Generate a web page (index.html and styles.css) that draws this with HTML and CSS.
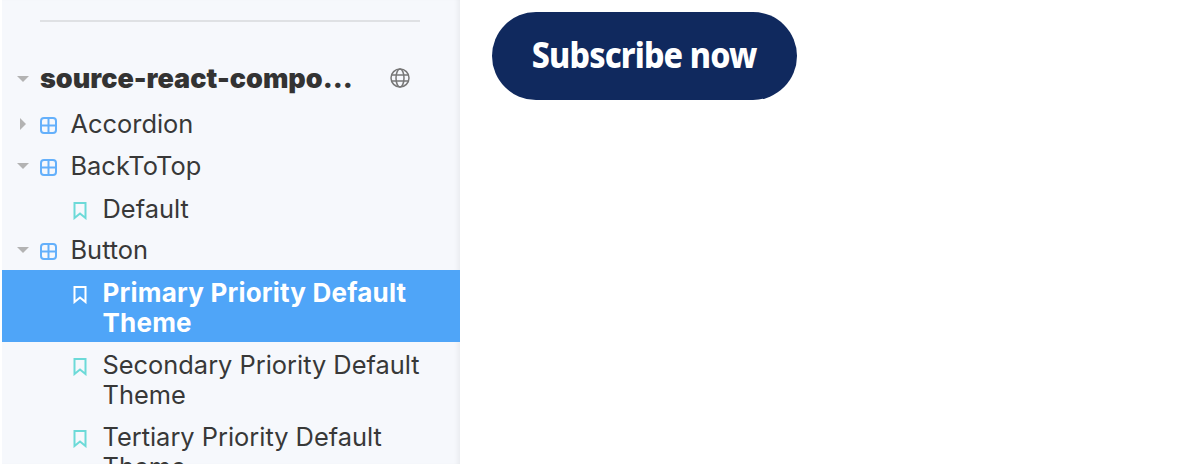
FILE: index.html
```html
<!DOCTYPE html>
<html lang="en">

<head>
    <meta charset="UTF-8">
    <meta name="viewport" content="width=device-width, initial-scale=1.0">
    <title>Button</title>

    <link rel="stylesheet" href="styles.css">
</head>

<body>
    <svg class="defs" width="0" height="0">
        <symbol id="caret-down" viewBox="0 0 12 6"><path d="M0 0h12L6 6z"/></symbol>
        <symbol id="caret-right" viewBox="0 0 6 12"><path d="M0 0l6 6-6 6z"/></symbol>
        <symbol id="grid" viewBox="0 0 17 17"><rect x="1" y="1" width="15" height="15" rx="3"/><path d="M8.500 1v15M1 8.500h15"/></symbol>
        <symbol id="mark" viewBox="0 0 14 18"><path d="M1.500 1h11v15L7 11.500 1.500 16z"/></symbol>
    </svg>

    <div class="sidebar">
        <div class="divider"></div>

        <div class="group">
            <svg class="caret"><use href="#caret-down"/></svg>
            <span class="group-name">source-react-compo...</span>
            <svg class="globe" viewBox="0 0 20 20">
                <circle cx="10" cy="10" r="9"/>
                <ellipse cx="10" cy="10" rx="4" ry="9"/>
                <path d="M1.500 7h17M1.500 13h17"/>
            </svg>
        </div>

        <div class="row">
            <svg class="caret-side"><use href="#caret-right"/></svg>
            <svg class="grid"><use href="#grid"/></svg>
            <span>Accordion</span>
        </div>
        <div class="row">
            <svg class="caret"><use href="#caret-down"/></svg>
            <svg class="grid"><use href="#grid"/></svg>
            <span>BackToTop</span>
        </div>
        <div class="story">
            <svg class="mark"><use href="#mark"/></svg>
            <span>Default</span>
        </div>
        <div class="row">
            <svg class="caret"><use href="#caret-down"/></svg>
            <svg class="grid"><use href="#grid"/></svg>
            <span>Button</span>
        </div>
        <div class="story selected">
            <svg class="mark"><use href="#mark"/></svg>
            <span>Primary Priority Default Theme</span>
        </div>
        <div class="story">
            <svg class="mark"><use href="#mark"/></svg>
            <span>Secondary Priority Default Theme</span>
        </div>
        <div class="story">
            <svg class="mark"><use href="#mark"/></svg>
            <span>Tertiary Priority Default Theme</span>
        </div>
    </div>

    <div class="content">
        <button class="subscribe" type="button"><span class="subscribe-label">Subscribe now</span></button>
    </div>
</body>

</html>
```

FILE: styles.css
```css
html, body {
    height: 100%;
}

body {
    margin: 0;
    display: flex;
    height: 464px;
    overflow: hidden;
    background-color: #ffffff;
    font-family: Inter, 'Noto Sans', sans-serif;
    color: #383838;
}

.defs {
    display: none;
}

.sidebar {
    width: 458px;
    margin-left: 2px;
    height: 464px;
    flex-shrink: 0;
    overflow: hidden;
    background-color: #f6f8fc;
    box-shadow: inset -5px 0 5px -3px rgba(0, 0, 0, 0.06);
    font-size: 25.4px;
    line-height: 30px;
}

.divider {
    height: 2px;
    background-color: #dfe1e4;
    margin: 20px 40px 0 38px;
}

.group {
    display: flex;
    align-items: center;
    box-sizing: border-box;
    height: 42px;
    margin-top: 38px;
    padding: 0 0 4px 15px;
}

.group .caret {
    margin-right: 11px;
}

.group-name {
    width: 350px;
    font-size: 27px;
    font-weight: 900;
    color: #333333;
    white-space: nowrap;
}

.globe {
    width: 20px;
    height: 20px;
    margin-top: -2px;
    fill: none;
    stroke: #777777;
    stroke-width: 1.5;
}

.row {
    display: flex;
    align-items: center;
    box-sizing: border-box;
    height: 42px;
    padding: 2px 0 0 15px;
}

.caret {
    width: 12px;
    height: 6px;
    fill: #b3b3b3;
    flex-shrink: 0;
}

.caret-side {
    width: 6px;
    height: 12px;
    margin: 0 3px;
    fill: #b3b3b3;
    flex-shrink: 0;
}

.grid {
    width: 17px;
    height: 17px;
    margin: 2px 13.5px 0 11px;
    fill: none;
    stroke: #64b0fb;
    stroke-width: 2;
    flex-shrink: 0;
}

.story {
    display: flex;
    align-items: flex-start;
    padding: 8px 30px 4px 71px;
}

.mark {
    width: 14px;
    height: 18px;
    margin: 8px 15.5px 0 0;
    fill: none;
    stroke: #6cdad8;
    stroke-width: 2;
    flex-shrink: 0;
}

.selected {
    background-color: #4fa5f8;
    color: #ffffff;
    font-size: 26px;
    font-weight: 700;
    letter-spacing: 0.2px;
}

.selected .mark {
    stroke: #ffffff;
}

.content {
    flex: 1;
    padding: 12px 32px;
}

.subscribe {
    width: 305px;
    height: 88px;
    padding: 0 0 4px;
    border: none;
    border-radius: 44px;
    background-color: #10295e;
    color: #ffffff;
    font-family: 'Noto Sans', sans-serif;
    font-size: 35px;
    font-weight: 800;
    letter-spacing: -0.9px;
    cursor: pointer;
}

.subscribe-label {
    display: inline-block;
    transform: scaleX(0.92);
}
```
